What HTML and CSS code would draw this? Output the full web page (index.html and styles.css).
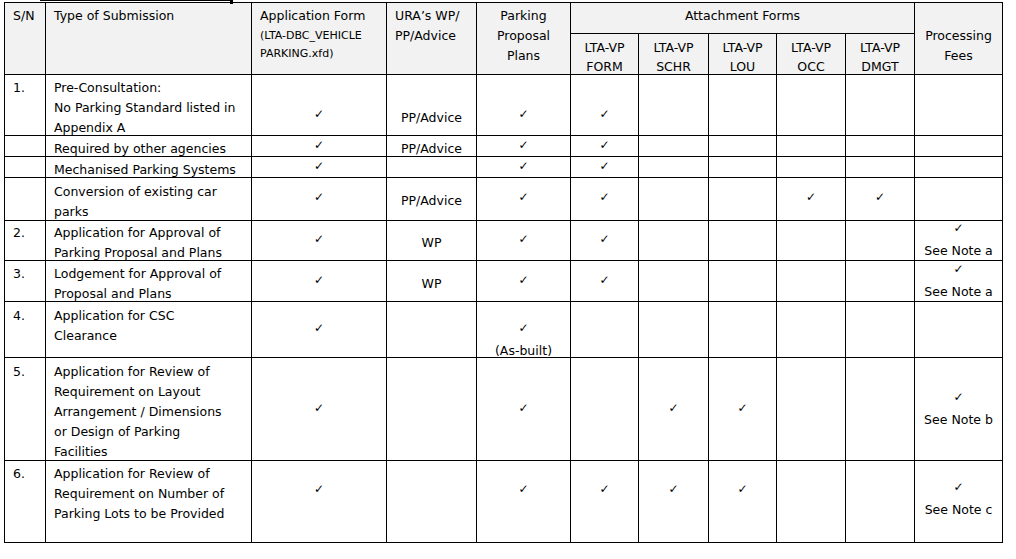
FILE: index.html
```html
<!DOCTYPE html>
<html>
<head>
<meta charset="utf-8">
<link rel="stylesheet" href="styles.css">
</head>
<body>
<div class="cut"><span class="cut-bar"></span><span class="cut-tail"></span></div>
<table class="grid">
  <colgroup>
    <col class="w-sn"><col class="w-type"><col class="w-app"><col class="w-ura"><col class="w-plan">
    <col class="w-form"><col class="w-schr"><col class="w-lou"><col class="w-occ"><col class="w-dmgt"><col class="w-fee">
  </colgroup>
  <thead>
    <tr class="h1">
      <th rowspan="2" class="tl">S/N</th>
      <th rowspan="2" class="tl">Type of Submission</th>
      <th rowspan="2" class="tl">Application Form<div class="small">(LTA-DBC_VEHICLE<br>PARKING.xfd)</div></th>
      <th rowspan="2" class="tl">URA’s WP/<br>PP/Advice</th>
      <th rowspan="2">Parking<br>Proposal<br>Plans</th>
      <th colspan="5">Attachment Forms</th>
      <th rowspan="2" class="fee-h">Processing<br>Fees</th>
    </tr>
    <tr class="h2">
      <th><div class="in">LTA-VP<br>FORM</div></th>
      <th><div class="in">LTA-VP<br>SCHR</div></th>
      <th><div class="in">LTA-VP<br>LOU</div></th>
      <th><div class="in">LTA-VP<br>OCC</div></th>
      <th><div class="in">LTA-VP<br>DMGT</div></th>
    </tr>
  </thead>
  <tbody>
    <tr class="r1a">
      <td class="tx"><div class="in">1.</div></td>
      <td class="tx"><div class="in">Pre-Consultation:<br>No Parking Standard listed in<br>Appendix A</div></td>
      <td class="c"><span class="ck">✓</span></td>
      <td class="c">PP/Advice</td>
      <td class="c"><span class="ck">✓</span></td>
      <td class="c"><span class="ck">✓</span></td>
      <td></td><td></td><td></td><td></td><td></td>
    </tr>
    <tr class="r1b sub">
      <td class="tx"></td>
      <td class="tx">Required by other agencies</td>
      <td class="c"><span class="ck">✓</span></td>
      <td class="c">PP/Advice</td>
      <td class="c"><span class="ck">✓</span></td>
      <td class="c"><span class="ck">✓</span></td>
      <td></td><td></td><td></td><td></td><td></td>
    </tr>
    <tr class="r1c sub">
      <td class="tx"></td>
      <td class="tx">Mechanised Parking Systems</td>
      <td class="c"><span class="ck">✓</span></td>
      <td></td>
      <td class="c"><span class="ck">✓</span></td>
      <td class="c"><span class="ck">✓</span></td>
      <td></td><td></td><td></td><td></td><td></td>
    </tr>
    <tr class="r1d sub">
      <td class="tx"></td>
      <td class="tx"><div class="in">Conversion of existing car<br>parks</div></td>
      <td class="c"><span class="ck">✓</span></td>
      <td class="c">PP/Advice</td>
      <td class="c"><span class="ck">✓</span></td>
      <td class="c"><span class="ck">✓</span></td>
      <td></td><td></td>
      <td class="c"><span class="ck">✓</span></td>
      <td class="c"><span class="ck">✓</span></td>
      <td></td>
    </tr>
    <tr class="r2">
      <td class="tx"><div class="in">2.</div></td>
      <td class="tx"><div class="in">Application for Approval of<br>Parking Proposal and Plans</div></td>
      <td class="c"><span class="ck">✓</span></td>
      <td class="c">WP</td>
      <td class="c"><span class="ck">✓</span></td>
      <td class="c"><span class="ck">✓</span></td>
      <td></td><td></td><td></td><td></td>
      <td class="fee"><div class="in"><div class="ck-line"><span class="ck">✓</span></div>See Note a</div></td>
    </tr>
    <tr class="r3">
      <td class="tx"><div class="in">3.</div></td>
      <td class="tx"><div class="in">Lodgement for Approval of<br>Proposal and Plans</div></td>
      <td class="c"><span class="ck">✓</span></td>
      <td class="c">WP</td>
      <td class="c"><span class="ck">✓</span></td>
      <td class="c"><span class="ck">✓</span></td>
      <td></td><td></td><td></td><td></td>
      <td class="fee"><div class="in"><div class="ck-line"><span class="ck">✓</span></div>See Note a</div></td>
    </tr>
    <tr class="r4">
      <td class="tx"><div class="in">4.</div></td>
      <td class="tx"><div class="in">Application for CSC<br>Clearance</div></td>
      <td class="c"><span class="ck">✓</span></td>
      <td></td>
      <td class="stack"><div class="in"><div class="ck-line"><span class="ck">✓</span></div>(As-built)</div></td>
      <td></td><td></td><td></td><td></td><td></td><td></td>
    </tr>
    <tr class="r5">
      <td class="tx"><div class="in">5.</div></td>
      <td class="tx"><div class="in">Application for Review of<br>Requirement on Layout<br>Arrangement / Dimensions<br>or Design of Parking<br>Facilities</div></td>
      <td class="c"><span class="ck">✓</span></td>
      <td></td>
      <td class="c"><span class="ck">✓</span></td>
      <td></td>
      <td class="c"><span class="ck">✓</span></td>
      <td class="c"><span class="ck">✓</span></td>
      <td></td><td></td>
      <td class="fee"><div class="in"><div class="ck-line"><span class="ck">✓</span></div>See Note b</div></td>
    </tr>
    <tr class="r6">
      <td class="tx"><div class="in">6.</div></td>
      <td class="tx"><div class="in">Application for Review of<br>Requirement on Number of<br>Parking Lots to be Provided</div></td>
      <td class="c"><span class="ck">✓</span></td>
      <td></td>
      <td class="c"><span class="ck">✓</span></td>
      <td class="c"><span class="ck">✓</span></td>
      <td class="c"><span class="ck">✓</span></td>
      <td class="c"><span class="ck">✓</span></td>
      <td></td><td></td>
      <td class="fee"><div class="in"><div class="ck-line"><span class="ck">✓</span></div>See Note c</div></td>
    </tr>
  </tbody>
</table>
</body>
</html>
```
FILE: styles.css
```css
html, body {
  margin: 0;
  padding: 0;
  background: #ffffff;
}
body {
  font-family: "DejaVu Sans", "Liberation Sans", sans-serif;
  font-size: 12.5px;
  line-height: 20px;
  color: #000000;
}
.cut {
  height: 2px;
  position: relative;
}
.cut-bar {
  display: block;
  margin-left: 40px;
  width: 193px;
  height: 1px;
  background: #000;
}
.cut-tail {
  position: absolute;
  left: 230px;
  top: 0;
  width: 3px;
  height: 4px;
  background: #000;
}
.grid {
  border-collapse: collapse;
  table-layout: fixed;
  width: 998px;
  margin-left: 4px;
}
.w-sn { width: 41px; }
.w-type { width: 206px; }
.w-app { width: 135px; }
.w-ura { width: 90px; }
.w-plan { width: 94px; }
.w-form { width: 68px; }
.w-schr { width: 70px; }
.w-lou { width: 68px; }
.w-occ { width: 69px; }
.w-dmgt { width: 69px; }
.w-fee { width: 88px; }

.grid th,
.grid td {
  border: 1px solid #000;
  padding: 0;
  vertical-align: top;
  text-align: center;
  white-space: nowrap;
  overflow: hidden;
}
.grid th {
  background: #f2f2f2;
  font-weight: normal;
}
.grid th.tl,
.grid td.tx {
  text-align: left;
  padding-left: 8px;
}
.in {
  margin-bottom: -10px;
}
.small {
  font-size: 11px;
  line-height: 18px;
  padding-top: 1px;
}
.h1 { height: 31px; }
.h2 { height: 41px; }
.h1 th { padding-top: 2.5px; }
.h1 th.fee-h { padding-top: 22.5px; }
.h2 th { padding-top: 3.5px; line-height: 19.5px; }

.ck {
  font-size: 12px;
  line-height: 0;
  vertical-align: 4px;
}
.ck-line {
  line-height: 18px;
}
.grid tr.sub td {
  border-top-color: #a6a6a6;
  line-height: 14px;
  padding-top: 6px;
}
.grid tr.sub td .in { line-height: 20px; }

.r1a { height: 61px; }
.r1b { height: 21px; }
.r1c { height: 21px; }
.r1d { height: 43px; }
.r2 { height: 40px; }
.r3 { height: 41px; }
.r4 { height: 56px; }
.r5 { height: 103px; }
.r6 { height: 82px; }

.r1a td.tx { padding-top: 2.5px; }
.r1a td.c { padding-top: 33px; }
.grid .r1d td.tx { padding-top: 3.5px; }
.grid .r1d td.c { padding-top: 13px; line-height: 20px; }
.r2 td.tx { padding-top: 1.5px; }
.r2 td.c { padding-top: 11.5px; }
.r2 td.fee { padding-top: 2px; }
.r3 td.tx { padding-top: 2.5px; }
.r3 td.c { padding-top: 13px; }
.r3 td.fee { padding-top: 3px; }
.r4 td.tx { padding-top: 3.5px; }
.r4 td.c { padding-top: 19.5px; }
.r4 td.stack { padding-top: 21px; }
.r5 td.tx { padding-top: 3.5px; }
.r5 td.c { padding-top: 43.5px; }
.r5 td.fee { padding-top: 34px; }
.r6 td.tx { padding-top: 2.5px; }
.r6 td.c { padding-top: 21.5px; }
.r6 td.fee { padding-top: 21px; }
```
